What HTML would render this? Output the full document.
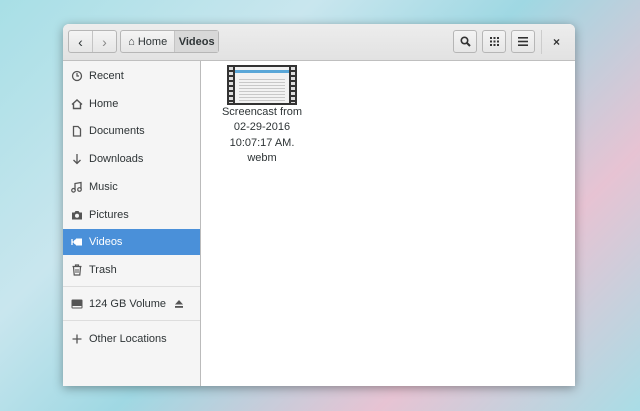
<html><head><style>
body{margin:0;width:640px;height:411px;overflow:hidden;font-family:"Liberation Sans",sans-serif;font-size:11px;color:#2e3436;
background:linear-gradient(135deg,#a8dfe6 0%,#c9e6ee 30%,#9fd8e3 50%,#e7c3d3 75%,#a9dde6 100%);}
.win{position:absolute;left:63px;top:24px;width:512px;height:362px;background:#fff;border-radius:6px 6px 0 0;box-shadow:0 2px 10px rgba(0,0,0,.35);overflow:hidden}
.hb{position:absolute;left:0;top:0;width:512px;height:36px;background:linear-gradient(#ededed,#e2e2e2);border-bottom:1px solid #bfbfbf}
.btn{position:absolute;top:6px;height:23px;border:1px solid #b6b6b6;border-radius:3px;background:linear-gradient(#f4f4f4,#e6e6e6);box-sizing:border-box;display:flex;align-items:center;justify-content:center;font-size:11px}
.side{position:absolute;left:0;top:37px;width:137px;height:325px;background:#f5f5f5;border-right:1px solid #bbb}
.row{position:absolute;left:0;width:137px;height:26px;display:flex;align-items:center;padding-left:26px;box-sizing:border-box}
.ic{position:absolute;left:8px;top:7px;width:12px;height:12px}
.sep{position:absolute;left:0;width:137px;height:1px;background:#ddd}
</style></head><body>
<div class="win">
<div class="hb">
 <div class="btn" style="left:5px;width:49px"><span style="flex:1;text-align:center;font-size:14px">&#8249;</span><span style="width:1px;height:21px;background:#c4c4c4"></span><span style="flex:1;text-align:center;font-size:14px;color:#888">&#8250;</span></div>
 <div class="btn" style="left:57px;width:99px;padding:0"><span style="width:55px;text-align:center">&#8962; Home</span><span style="width:44px;height:21px;background:#d8d8d8;border-left:1px solid #c4c4c4;display:flex;align-items:center;justify-content:center;font-weight:bold">Videos</span></div>
 <div class="btn" style="left:390px;width:24px"><svg width="11" height="11"><circle cx="4.5" cy="4.5" r="3.2" stroke="#333" stroke-width="1.6" fill="none"/><path d="M7 7l3 3" stroke="#333" stroke-width="2"/></svg></div>
 <div class="btn" style="left:419px;width:24px"><svg width="9" height="9" fill="#333"><rect x="0" y="0" width="2" height="2"/><rect x="3.5" y="0" width="2" height="2"/><rect x="7" y="0" width="2" height="2"/><rect x="0" y="3.5" width="2" height="2"/><rect x="3.5" y="3.5" width="2" height="2"/><rect x="7" y="3.5" width="2" height="2"/><rect x="0" y="7" width="2" height="2"/><rect x="3.5" y="7" width="2" height="2"/><rect x="7" y="7" width="2" height="2"/></svg></div>
 <div class="btn" style="left:448px;width:24px"><svg width="10" height="9" fill="#333"><rect y="0" width="10" height="1.6"/><rect y="3.7" width="10" height="1.6"/><rect y="7.4" width="10" height="1.6"/></svg></div>
 <div style="position:absolute;left:478px;top:6px;width:1px;height:24px;background:#ccc"></div>
 <div style="position:absolute;left:490px;top:11px;font-size:12px;font-weight:bold;color:#333">&#215;</div>
</div>
<div class="side">
 <div class="row" style="top:2px"><svg class="ic"><circle cx="6" cy="6" r="4.5" stroke="#555" stroke-width="1.3" fill="none"/><path d="M6 3v3h2" stroke="#555" stroke-width="1.2" fill="none"/></svg>Recent</div>
 <div class="row" style="top:30px"><svg class="ic"><path d="M1 6.5L6 2l5 4.5M2.5 5.5V10.5h7V5.5" stroke="#555" stroke-width="1.4" fill="none"/></svg>Home</div>
 <div class="row" style="top:57px"><svg class="ic"><path d="M2.5 1.5h4.5l2.5 2.5v7h-7z" stroke="#555" stroke-width="1.3" fill="none"/></svg>Documents</div>
 <div class="row" style="top:85px"><svg class="ic"><path d="M6 1v9M2.5 7L6 10.5 9.5 7" stroke="#555" stroke-width="1.3" fill="none"/></svg>Downloads</div>
 <div class="row" style="top:113px"><svg class="ic"><path d="M4 9V2.5l6-1V8" stroke="#555" stroke-width="1.3" fill="none"/><circle cx="2.5" cy="9.3" r="1.8" stroke="#555" stroke-width="1.2" fill="none"/><circle cx="8.5" cy="8.5" r="1.8" stroke="#555" stroke-width="1.2" fill="none"/></svg>Music</div>
 <div class="row" style="top:141px"><svg class="ic"><path d="M1 3.5h2.5l1-1.5h3l1 1.5H11v7H1z" fill="#555"/><circle cx="6" cy="6.8" r="2" fill="#f5f5f5"/></svg>Pictures</div>
 <div class="row" style="top:168px;background:#4a90d9;color:#fff"><svg class="ic"><path d="M1 3v6M1 6h2" stroke="#fff" stroke-width="1.3"/><path d="M3 4.5l2-1.5v6l-2-1.5z" fill="#fff"/><rect x="5" y="2.5" width="6" height="7" fill="#fff"/></svg>Videos</div>
 <div class="row" style="top:196px"><svg class="ic"><path d="M1.5 2.5h9M4.5 2.5V1h3v1.5M2.5 3l.7 8h5.6l.7-8" stroke="#555" stroke-width="1.2" fill="none"/><path d="M5 5v4M7 5v4" stroke="#555"/></svg>Trash</div>
 <div class="sep" style="top:225px"></div>
 <div class="row" style="top:230px"><svg class="ic"><rect x="0.5" y="1.5" width="11" height="9" rx="1" fill="#555"/><rect x="1.5" y="8" width="9" height="1.5" fill="#f5f5f5"/></svg>124 GB Volume<svg style="position:absolute;left:111px;top:8px" width="10" height="10"><path d="M5 1l4 4.5H1z" fill="#555"/><rect x="1" y="7" width="8" height="1.8" fill="#555"/></svg></div>
 <div class="sep" style="top:259px"></div>
 <div class="row" style="top:265px"><svg class="ic"><path d="M6 1.5v9M1.5 6h9" stroke="#555" stroke-width="1.3"/></svg>Other Locations</div>
</div>
<div style="position:absolute;left:164px;top:41px;width:70px;height:40px;background:#333">
 <div style="position:absolute;left:8px;top:2px;width:54px;height:36px;background:#f2f2f2"><div style="height:3px;background:#5aa7d8;margin-top:3px"></div>
 <div style="margin:4px 4px;height:24px;background:repeating-linear-gradient(#f2f2f2 0 2px,#c8c8c8 2px 3px)"></div></div>
 <div style="position:absolute;left:2px;top:2px;width:4px;height:36px;background:repeating-linear-gradient(#ddd 0 3px,#333 3px 5px)"></div>
 <div style="position:absolute;right:2px;top:2px;width:4px;height:36px;background:repeating-linear-gradient(#ddd 0 3px,#333 3px 5px)"></div>
</div>
<div style="position:absolute;left:149px;top:81px;width:100px;text-align:center;line-height:15.3px">Screencast from<br>02-29-2016<br>10:07:17 AM.<br>webm</div>
</div>
</body></html>
